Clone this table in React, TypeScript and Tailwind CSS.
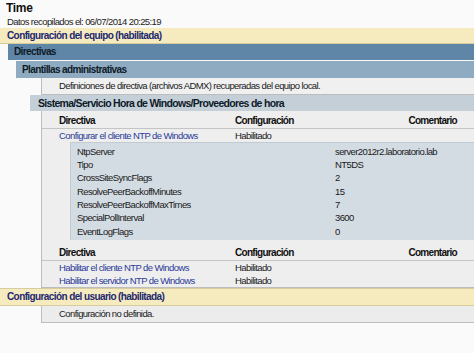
import React from "react";

const font = "font-['Liberation_Sans',Arial,sans-serif]";

const rows: [string, string][] = [
  ["NtpServer", "server2012r2.laboratorio.lab"],
  ["Tipo", "NT5DS"],
  ["CrossSiteSyncFlags", "2"],
  ["ResolvePeerBackoffMinutes", "15"],
  ["ResolvePeerBackoffMaxTimes", "7"],
  ["SpecialPollInterval", "3600"],
  ["EventLogFlags", "0"],
];

function Header() {
  return (
    <div className="flex h-[15px] items-center border-b border-[#c4c4c4] pl-[17px] pr-[17px] text-[10px] font-bold tracking-[-0.7px] text-[#111]">
      <div className="w-[176px]">Directiva</div>
      <div className="flex-1">Configuración</div>
      <div>Comentario</div>
    </div>
  );
}

function LinkRow({ name, value }: { name: string; value: string }) {
  return (
    <div className="flex h-[13px] items-center pl-[17px] pr-[17px]">
      <div className="w-[176px] text-[#2a3a98]">{name}</div>
      <div className="flex-1 text-[#1a1a1a]">{value}</div>
    </div>
  );
}

export default function App() {
  return (
    <div className={`h-[353px] w-[474px] overflow-hidden bg-[#fafafa] text-[9.5px] leading-none tracking-[-0.6px] ${font}`}>
      <div className="flex h-[15px] items-center pl-[6px] text-[12px] font-bold tracking-[-0.3px] text-[#111]">Time</div>
      <div className="flex h-[13px] items-center pl-[7px] text-[#222]">Datos recopilados el: 06/07/2014 20:25:19</div>
      <div className="flex h-[16px] items-center border-b border-[#d6cca0] bg-[#f6eabf] pl-[7px] text-[10px] font-bold tracking-[-0.6px] text-[#1c2870]">
        Configuración del equipo (habilitada)
      </div>
      <div className="ml-[8px] flex h-[16px] items-center bg-[#5f86a6] pl-[6px] text-[10px] font-bold tracking-[-0.6px] text-[#0e1a28]">
        Directivas
      </div>
      <div className="ml-[16px] mt-px flex h-[17px] items-center bg-[#8eabc1] pl-[6px] text-[10px] font-bold tracking-[-0.6px] text-[#0e1a28]">
        Plantillas administrativas
      </div>
      <div className="ml-[41px] flex h-[17px] items-center border-b border-l border-[#bdbdbd] bg-[#f0f0f0] pl-[17px] text-[#1a1a1a]">
        Definiciones de directiva (archivos ADMX) recuperadas del equipo local.
      </div>
      <div className="ml-[30px] flex h-[16px] items-center bg-[#c4cfd8] pl-[8px] text-[10.5px] font-bold tracking-[-0.7px] text-[#0e1a28]">
        Sistema/Servicio Hora de Windows/Proveedores de hora
      </div>
      <div className="ml-[41px] h-[177px] border-b border-l border-[#bdbdbd] bg-[#eeeeee] pt-[3px]">
        <Header />
        <LinkRow name="Configurar el cliente NTP de Windows" value="Habilitado" />
        <div className="ml-[28px] border-l border-t border-[#c2cad2] bg-[#d4dce3] pb-[2px] pl-[6px] pt-[2px] text-[#1a1a1a]">
          {rows.map(([k, v]) => (
            <div key={k} className="flex h-[13.3px] items-center">
              <div className="w-[258px]">{k}</div>
              <div>{v}</div>
            </div>
          ))}
        </div>
        <div className="mt-[6px]">
          <Header />
          <LinkRow name="Habilitar el cliente NTP de Windows" value="Habilitado" />
          <LinkRow name="Habilitar el servidor NTP de Windows" value="Habilitado" />
        </div>
      </div>
      <div className="flex h-[18px] items-center border-b border-t border-[#d6cca0] bg-[#f6eabf] pl-[7px] text-[10px] font-bold tracking-[-0.6px] text-[#1c2870]">
        Configuración del usuario (habilitada)
      </div>
      <div className="ml-[41px] flex h-[17px] items-center border-b border-l border-[#bdbdbd] bg-[#ececec] pl-[17px] text-[#1a1a1a]">
        Configuración no definida.
      </div>
    </div>
  );
}
